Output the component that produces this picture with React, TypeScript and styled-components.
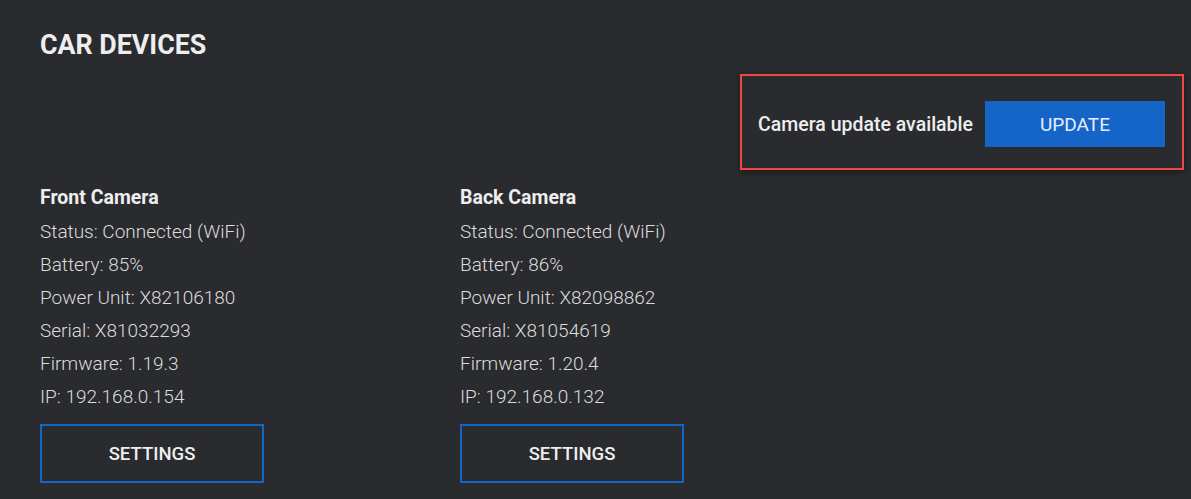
import React from "react";
import styled, { createGlobalStyle } from "styled-components";

const GlobalStyle = createGlobalStyle`
  html, body {
    margin: 0;
    padding: 0;
    background: #2a2b2f;
  }
  body {
    font-family: Roboto, "Noto Sans", "Liberation Sans", sans-serif;
    color: #e6e6e6;
  }
`;

const Page = styled.div`
  min-height: 499px;
  padding: 28px 7px 0 40px;
  box-sizing: border-box;
  background: #2a2b2f;
`;

const Title = styled.h1`
  margin: 0;
  font-size: 26.8px;
  line-height: 34px;
  font-weight: 700;
  color: #eeeeee;
`;

const UpdateRow = styled.div`
  display: flex;
  justify-content: flex-end;
  margin-top: 12px;
`;

const UpdateBox = styled.div`
  display: flex;
  align-items: center;
  gap: 12px;
  padding: 25px 17px 21px 16px;
  border: 2px solid #f04646;
  box-shadow: 0 2px 6px rgba(0, 0, 0, 0.45);
`;

const UpdateText = styled.span`
  font-size: 19.5px;
  font-weight: 500;
  color: #eeeeee;
`;

const UpdateButton = styled.button`
  width: 180px;
  height: 46px;
  border: none;
  background: #1565c9;
  color: #e8eef8;
  font-family: inherit;
  font-size: 19px;
  font-weight: 400;
  text-transform: uppercase;
  cursor: pointer;
`;

const Cameras = styled.div`
  display: grid;
  grid-template-columns: 420px 420px;
  margin-top: 11px;
`;

const Camera = styled.div`
  display: flex;
  flex-direction: column;
  align-items: flex-start;
`;

const CameraName = styled.div`
  font-size: 19.5px;
  line-height: 34px;
  font-weight: 700;
  color: #eeeeee;
`;

const InfoLine = styled.div`
  font-size: 19px;
  line-height: 33px;
  font-weight: 300;
  color: #dcdcdc;
`;

const SettingsButton = styled.button`
  margin-top: 11px;
  width: 224px;
  height: 59px;
  background: transparent;
  border: 2px solid #1565c9;
  color: #eeeeee;
  font-family: inherit;
  font-size: 18.5px;
  font-weight: 500;
  text-transform: uppercase;
  cursor: pointer;
`;

type CameraInfo = {
  name: string;
  battery: string;
  powerUnit: string;
  serial: string;
  firmware: string;
  ip: string;
};

const cameras: CameraInfo[] = [
  {
    name: "Front Camera",
    battery: "85%",
    powerUnit: "X82106180",
    serial: "X81032293",
    firmware: "1.19.3",
    ip: "192.168.0.154",
  },
  {
    name: "Back Camera",
    battery: "86%",
    powerUnit: "X82098862",
    serial: "X81054619",
    firmware: "1.20.4",
    ip: "192.168.0.132",
  },
];

const App = () => {
  return (
    <>
      <GlobalStyle />
      <Page>
        <Title>CAR DEVICES</Title>
        <UpdateRow>
          <UpdateBox>
            <UpdateText>Camera update available</UpdateText>
            <UpdateButton>Update</UpdateButton>
          </UpdateBox>
        </UpdateRow>
        <Cameras>
          {cameras.map((c) => (
            <Camera key={c.name}>
              <CameraName>{c.name}</CameraName>
              <InfoLine>Status: Connected (WiFi)</InfoLine>
              <InfoLine>Battery: {c.battery}</InfoLine>
              <InfoLine>Power Unit: {c.powerUnit}</InfoLine>
              <InfoLine>Serial: {c.serial}</InfoLine>
              <InfoLine>Firmware: {c.firmware}</InfoLine>
              <InfoLine>IP: {c.ip}</InfoLine>
              <SettingsButton>Settings</SettingsButton>
            </Camera>
          ))}
        </Cameras>
      </Page>
    </>
  );
};

export default App;
